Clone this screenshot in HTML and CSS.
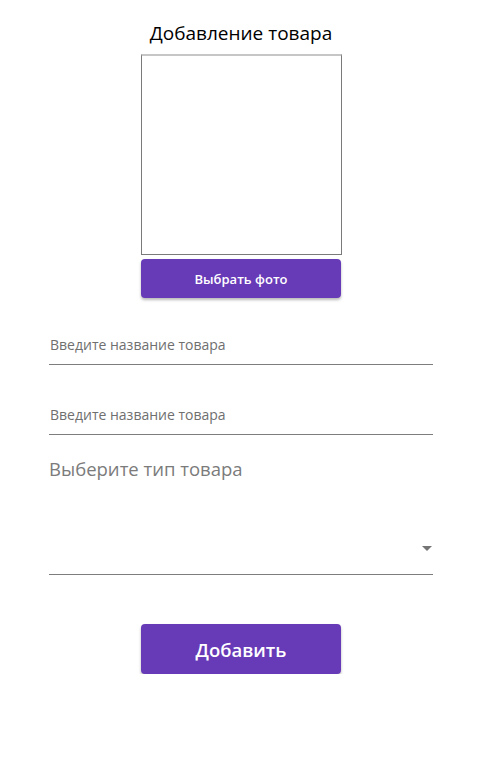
FILE: index.html
```html
<!DOCTYPE html>
<html lang="ru">
<head>
<meta charset="utf-8">
<title>Добавление товара</title>
<link rel="stylesheet" href="styles.css">
</head>
<body>
<main class="page">
  <h1 class="title">Добавление товара</h1>
  <div class="photo"></div>
  <button class="btn btn-photo" type="button">Выбрать фото</button>
  <div class="form">
    <div class="field field-first"><span class="placeholder">Введите название товара</span></div>
    <div class="field field-second"><span class="placeholder">Введите название товара</span></div>
    <div class="select-label">Выберите тип товара</div>
    <div class="select"><span class="arrow"></span></div>
  </div>
  <button class="btn btn-add" type="button">Добавить</button>
</main>
</body>
</html>
```

FILE: styles.css
```css
* { box-sizing: border-box; }
html, body { margin: 0; padding: 0; background: #fff; }
body { font-family: "Open Sans", "Noto Sans", "Liberation Sans", sans-serif; color: #000; }
.page { display: flex; flex-direction: column; align-items: center; width: 482px; }
.title { font-size: 19px; font-weight: 400; line-height: 26px; margin: 20px 0 8px; }
.photo { width: 201px; height: 201px; border: 1px solid #7a7a7a; border-top: 2px solid #c6c6c6; }
.btn { width: 200px; border: none; border-radius: 4px; background: #673ab7; color: #fff; font-family: inherit; font-weight: 600; box-shadow: 0 2px 3px rgba(0,0,0,0.28); padding: 0; }
.btn-photo { height: 39px; margin-top: 4px; font-size: 13px; }
.form { width: 384px; display: flex; flex-direction: column; }
.field { padding: 0 0 10px 1px; line-height: 20px; border-bottom: 1px solid #7d7d7d; height: 31px; }
.field-first { margin-top: 36px; }
.field-second { margin-top: 39px; }
.placeholder { font-size: 14px; color: #6f6f6f; }
.select-label { margin-top: 22px; font-size: 18.5px; line-height: 24px; color: #7b7b7b; }
.select { height: 94px; border-bottom: 1px solid #7d7d7d; display: flex; justify-content: flex-end; align-items: flex-end; padding: 0 1px 23px 0; }
.arrow { width: 0; height: 0; border-top: 5px solid #757575; border-left: 5px solid transparent; border-right: 5px solid transparent; }
.btn-add { height: 50px; margin-top: 49px; font-size: 18.5px; }
```
